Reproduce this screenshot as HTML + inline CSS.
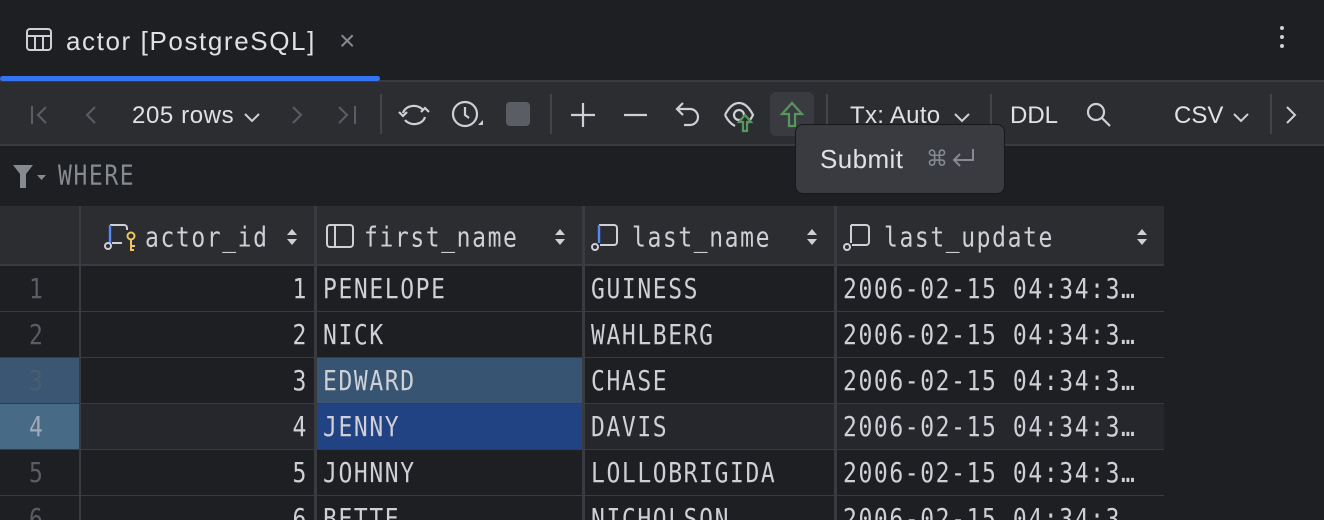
<!DOCTYPE html>
<html style="height:520px;overflow:hidden"><head><meta charset="utf-8"><style>
*{margin:0;padding:0;box-sizing:border-box}
body{width:1324px;height:520px;overflow:hidden;background:#1e1f22;font-family:"Liberation Sans",sans-serif;color:#dfe1e5;position:relative}
.a{position:absolute}
.mono{font-family:"DejaVu Sans Mono",monospace;font-size:23px;letter-spacing:1.6px;color:#ced0d6}
.mono span{display:inline-block;transform:scaleY(1.18)}
.cell{position:absolute;height:45px;line-height:49px;overflow:hidden;white-space:nowrap}
svg{position:absolute;overflow:visible}
</style></head><body>
<div class="a" style="left:0;top:0;width:1324px;height:81px;background:#1e1f22"></div>
<svg style="left:26px;top:28px" width="26" height="24" viewBox="0 0 26 24"><rect x="1" y="1" width="24" height="21" rx="3" fill="none" stroke="#ced0d6" stroke-width="2"/><line x1="1" y1="8" x2="25" y2="8" stroke="#ced0d6" stroke-width="2"/><line x1="9" y1="8" x2="9" y2="22" stroke="#ced0d6" stroke-width="2"/><line x1="17" y1="8" x2="17" y2="22" stroke="#ced0d6" stroke-width="2"/></svg>
<div class="a" style="left:66px;top:26px;font-size:26px;letter-spacing:1.6px;color:#dfe1e5">actor [PostgreSQL]</div>
<div class="a" style="left:339px;top:25px;font-size:28px;color:#868a91">×</div>
<div class="a" style="left:1280px;top:26px;width:6px">
<div style="width:4px;height:4px;border-radius:2px;background:#ced0d6;margin-bottom:5px"></div><div style="width:4px;height:4px;border-radius:2px;background:#ced0d6;margin-bottom:5px"></div><div style="width:4px;height:4px;border-radius:2px;background:#ced0d6"></div></div>
<div class="a" style="left:0;top:80px;width:1324px;height:2px;background:#393b40"></div>
<div class="a" style="left:0;top:76px;width:380px;height:5px;border-radius:3px;background:#3574f0"></div>
<div class="a" style="left:0;top:82px;width:1324px;height:63px;background:#2b2d30"></div>
<div class="a" style="left:0;top:144px;width:1324px;height:2px;background:#393b40"></div>
<svg style="left:30px;top:104px" width="22" height="22" viewBox="0 0 22 22" fill="none" stroke="#5a5d63" stroke-width="2"><path d="M2 2v18M16 3L8 11l8 8"/></svg>
<svg style="left:80px;top:104px" width="22" height="22" viewBox="0 0 22 22" fill="none" stroke="#5a5d63" stroke-width="2"><path d="M15 3L7 11l8 8"/></svg>
<div class="a" style="left:132px;top:102px;font-size:24px;letter-spacing:0.6px;color:#dfe1e5">205 rows</div>
<svg style="left:243px;top:111px" width="18" height="12" viewBox="0 0 18 12" fill="none" stroke="#ced0d6" stroke-width="2"><path d="M2 3l7 7 7-7"/></svg>
<svg style="left:286px;top:104px" width="22" height="22" viewBox="0 0 22 22" fill="none" stroke="#5a5d63" stroke-width="2"><path d="M7 3l8 8-8 8"/></svg>
<svg style="left:336px;top:104px" width="22" height="22" viewBox="0 0 22 22" fill="none" stroke="#5a5d63" stroke-width="2"><path d="M3 3l8 8-8 8M19 2v18"/></svg>
<div class="a" style="left:380px;top:94px;width:2px;height:40px;background:#43454a"></div>
<svg style="left:398px;top:100px" width="32" height="30" viewBox="0 0 32 30" fill="none" stroke="#ced0d6" stroke-width="2.2"><path d="M5 13a11 9 0 0 1 20-3M27 17a11 9 0 0 1-20 3"/><path d="M1 12l4 4 4-4M23 12l4-4 4 4"/></svg>
<svg style="left:450px;top:99px" width="36" height="34" viewBox="0 0 36 34" fill="none" stroke="#ced0d6" stroke-width="2.2"><circle cx="15" cy="15" r="12"/><path d="M15 8v8l4 3"/><path d="M28 26l5 0 0-5z" fill="#ced0d6" stroke="none"/></svg>
<div class="a" style="left:506px;top:102px;width:24px;height:24px;border-radius:4px;background:#5a5d63"></div>
<div class="a" style="left:550px;top:94px;width:2px;height:40px;background:#43454a"></div>
<svg style="left:569px;top:101px" width="28" height="28" viewBox="0 0 28 28" stroke="#ced0d6" stroke-width="2.2"><path d="M14 2v24M2 14h24"/></svg>
<svg style="left:621px;top:101px" width="28" height="28" viewBox="0 0 28 28" stroke="#ced0d6" stroke-width="2.2"><path d="M3 14h23"/></svg>
<svg style="left:674px;top:100px" width="28" height="30" viewBox="0 0 28 30" fill="none" stroke="#ced0d6" stroke-width="2.2"><path d="M9 3L3 9l6 6M3 9h13a8 8 0 0 1 0 16h-6"/></svg>
<svg style="left:722px;top:100px" width="36" height="34" viewBox="0 0 36 34" fill="none" stroke-width="2.2"><path d="M3 15c4-8 9-12 14-12s10 4 14 12c-2 4-4 7-7 9M3 15c3 6 6 9 10 11" stroke="#ced0d6"/><circle cx="17" cy="15" r="5" stroke="#ced0d6"/><path d="M21 31v-9h-4l6-7 6 7h-4v9z" stroke="#57965c" fill="#2b2d30"/></svg>
<div class="a" style="left:770px;top:92px;width:44px;height:44px;border-radius:6px;background:#393b40"></div>
<svg style="left:778px;top:100px" width="28" height="28" viewBox="0 0 28 28" fill="none" stroke="#57965c" stroke-width="2.2"><path d="M11 26V14H4l10-11 10 11h-7v12z"/></svg>
<div class="a" style="left:826px;top:94px;width:2px;height:40px;background:#43454a"></div>
<div class="a" style="left:850px;top:102px;font-size:24px;letter-spacing:0.3px;color:#dfe1e5">Tx: Auto</div>
<svg style="left:953px;top:111px" width="18" height="12" viewBox="0 0 18 12" fill="none" stroke="#ced0d6" stroke-width="2"><path d="M2 3l7 7 7-7"/></svg>
<div class="a" style="left:990px;top:94px;width:2px;height:40px;background:#43454a"></div>
<div class="a" style="left:1010px;top:102px;font-size:24px;color:#dfe1e5">DDL</div>
<svg style="left:1085px;top:101px" width="28" height="28" viewBox="0 0 28 28" fill="none" stroke="#ced0d6" stroke-width="2.2"><circle cx="11" cy="11" r="8"/><path d="M17 17l8 8"/></svg>
<div class="a" style="left:1174px;top:102px;font-size:24px;color:#dfe1e5">CSV</div>
<svg style="left:1232px;top:111px" width="18" height="12" viewBox="0 0 18 12" fill="none" stroke="#ced0d6" stroke-width="2"><path d="M2 3l7 7 7-7"/></svg>
<div class="a" style="left:1270px;top:94px;width:2px;height:40px;background:#43454a"></div>
<svg style="left:1283px;top:104px" width="16" height="22" viewBox="0 0 16 22" fill="none" stroke="#ced0d6" stroke-width="2"><path d="M4 3l8 8-8 8"/></svg>
<svg style="left:13px;top:164px" width="34" height="26" viewBox="0 0 34 26" fill="#868a91"><path d="M0 1h20l-7 9v14h-6V10z"/><path d="M24 11h9l-4.5 5z"/></svg>
<div class="a mono" style="left:58px;top:163px;color:#868a91"><span>WHERE</span></div>
<div class="a" style="left:0;top:206px;width:1164px;height:314px;background:#393b40"></div>
<div class="a" style="left:0;top:206px;width:79px;height:58px;background:#2b2d30"></div>
<div class="a" style="left:81px;top:206px;width:233px;height:58px;background:#2b2d30"></div>
<div class="a" style="left:317px;top:206px;width:265px;height:58px;background:#2b2d30"></div>
<div class="a" style="left:585px;top:206px;width:249px;height:58px;background:#2b2d30"></div>
<div class="a" style="left:837px;top:206px;width:327px;height:58px;background:#2b2d30"></div>
<svg style="left:104px;top:223px" width="34" height="30" viewBox="0 0 34 30" fill="none" stroke-width="2"><path d="M6 2h14a3 3 0 0 1 3 3v2" stroke="#ced0d6"/><path d="M6 2v18" stroke="#548af7" stroke-width="2.4"/><path d="M8 20h10" stroke="#ced0d6"/><circle cx="4" cy="23" r="3" stroke="#ced0d6"/><circle cx="27" cy="13" r="3.5" stroke="#f2c55c"/><path d="M27 17v11M27 23h4M27 27h3" stroke="#f2c55c"/></svg>
<div class="a mono" style="left:145px;top:225px"><span>actor_id</span></div>
<svg style="left:287px;top:229px" width="10" height="16" viewBox="0 0 10 16" fill="#ced0d6"><path d="M5 0l5 6H0zM5 16l5-6H0z"/></svg>
<svg style="left:326px;top:224px" width="30" height="26" viewBox="0 0 30 26" fill="none" stroke="#ced0d6" stroke-width="2"><rect x="1" y="1" width="26" height="22" rx="3"/><path d="M9 1v22"/></svg>
<div class="a mono" style="left:364px;top:225px"><span>first_name</span></div>
<svg style="left:555px;top:229px" width="10" height="16" viewBox="0 0 10 16" fill="#ced0d6"><path d="M5 0l5 6H0zM5 16l5-6H0z"/></svg>
<svg style="left:591px;top:223px" width="34" height="30" viewBox="0 0 34 30" fill="none" stroke-width="2"><path d="M8 2h15a3 3 0 0 1 3 3v14a3 3 0 0 1-3 3h-14" stroke="#ced0d6"/><path d="M8 2v18" stroke="#548af7" stroke-width="2.4"/><circle cx="4" cy="24" r="3" stroke="#ced0d6"/></svg>
<div class="a mono" style="left:632px;top:225px"><span>last_name</span></div>
<svg style="left:807px;top:229px" width="10" height="16" viewBox="0 0 10 16" fill="#ced0d6"><path d="M5 0l5 6H0zM5 16l5-6H0z"/></svg>
<svg style="left:843px;top:223px" width="34" height="30" viewBox="0 0 34 30" fill="none" stroke-width="2" stroke="#ced0d6"><path d="M8 2h15a3 3 0 0 1 3 3v14a3 3 0 0 1-3 3h-14"/><path d="M8 2v18"/><circle cx="4" cy="24" r="3"/></svg>
<div class="a mono" style="left:884px;top:225px"><span>last_update</span></div>
<svg style="left:1137px;top:229px" width="10" height="16" viewBox="0 0 10 16" fill="#ced0d6"><path d="M5 0l5 6H0zM5 16l5-6H0z"/></svg>
<div id="rows"></div>
<script>
var d=[[1,"PENELOPE","GUINESS"],[2,"NICK","WAHLBERG"],[3,"EDWARD","CHASE"],[4,"JENNY","DAVIS"],[5,"JOHNNY","LOLLOBRIGIDA"],[6,"BETTE","NICHOLSON"]];
var h="";
d.forEach(function(r,i){var y=266+i*46;
var ht=i==5?520-y:45;
var bg=i==3?"#25272d":"#1e1f22";
var gb=i==2?"#3a5673":i==3?"#476a87":"#1e1f22";
var gc=i==2?"#4a5d70":i==3?"#a0aab8":"#5a5d63";
var fb=i==2?"#375572":i==3?"#214283":bg;
var s='height:'+ht+'px;';
h+='<div class="cell mono" style="'+s+'left:0;top:'+y+'px;width:79px;background:'+gb+';color:'+gc+';padding-left:29px"><span>'+r[0]+'</span></div>';
h+='<div class="cell mono" style="'+s+'left:81px;top:'+y+'px;width:233px;background:'+bg+';text-align:right;padding-right:6px"><span>'+r[0]+'</span></div>';
h+='<div class="cell mono" style="'+s+'left:317px;top:'+y+'px;width:265px;background:'+fb+';padding-left:6px"><span>'+r[1]+'</span></div>';
h+='<div class="cell mono" style="'+s+'left:585px;top:'+y+'px;width:249px;background:'+bg+';padding-left:6px"><span>'+r[2]+'</span></div>';
h+='<div class="cell mono" style="'+s+'left:837px;top:'+y+'px;width:327px;background:'+bg+';padding-left:6px"><span>2006-02-15 04:34:3…</span></div>';
});
document.getElementById("rows").innerHTML=h;
</script>
<div class="a" style="left:795px;top:124px;width:210px;height:70px;border-radius:8px;background:#393b40;border:1px solid #17181a"></div>
<div class="a" style="left:820px;top:144px;font-size:26px;letter-spacing:0.4px;color:#dfe1e5">Submit</div>
<div class="a" style="left:926px;top:146px;font-size:22px;color:#868a91">⌘</div>
<svg style="left:951px;top:147px" width="26" height="24" viewBox="0 0 26 24" fill="none" stroke="#868a91" stroke-width="2"><path d="M22 2v11H3M9 7l-6 6 6 6"/></svg>
</body></html>
